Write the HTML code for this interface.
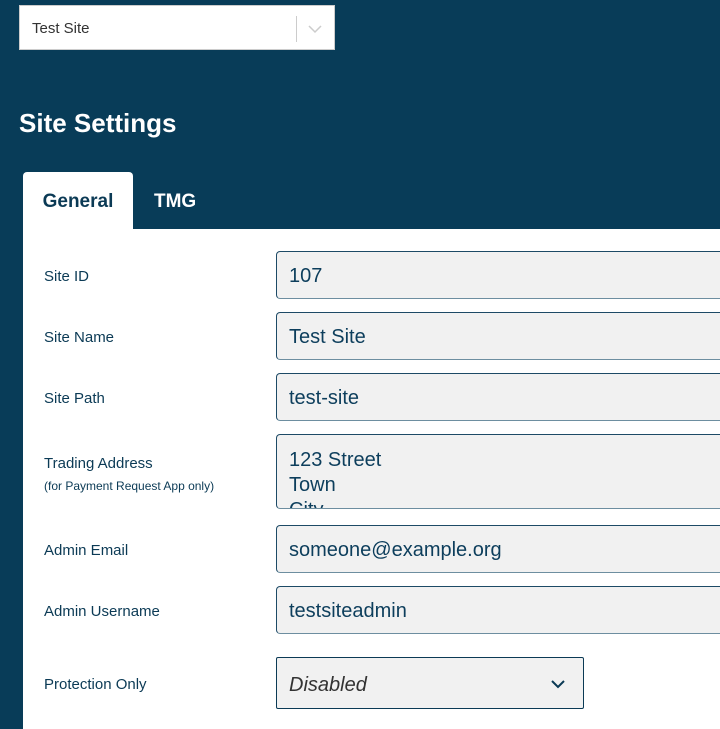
<!DOCTYPE html>
<html><head><style>
body{margin:0;width:720px;height:720px;overflow:hidden;background:#083c58;font-family:"Liberation Sans",sans-serif;position:relative}
.sel{position:absolute;left:19px;top:5px;width:316px;height:45px;background:#fff;border:1px solid #ccc;box-sizing:border-box}
.sel span{position:absolute;left:12px;top:14px;font-size:15px;color:#333}
.sel i{position:absolute;left:276px;top:10px;width:1px;height:26px;background:#ccc}
h1{position:absolute;left:19px;top:108px;margin:0;color:#fff;font-size:26px;font-weight:bold}
.tab{position:absolute;top:172px;height:60px;font-size:19px;font-weight:bold;line-height:60px}
.panel{position:absolute;left:23px;top:229px;width:697px;height:500px;background:#fff}
.lab{position:absolute;left:44px;font-size:15px;color:#0b3a55}
.inp{position:absolute;left:276px;width:460px;height:48px;background:#f1f1f1;border:1px solid #1d4a66;border-bottom-color:#6d8ea0;border-radius:4px;box-sizing:border-box;padding-left:12px;font-size:20px;color:#0d3e5c;line-height:48px;overflow:hidden}
</style></head><body>
<div class="sel"><span>Test Site</span><i></i>
<svg style="position:absolute;left:288px;top:18px" width="14" height="10"><path d="M1 2l6 6 6-6" stroke="#ccc" stroke-width="1.5" fill="none"/></svg></div>
<h1>Site Settings</h1>
<div class="panel"></div>
<div class="tab" style="left:23px;width:110px;background:#fff;border-radius:4px 4px 0 0;color:#0b3a55;text-align:center">General</div>
<div class="tab" style="left:154px;color:#fff">TMG</div>
<div class="lab" style="top:268px">Site ID</div>
<div class="inp" style="top:251px">107</div>
<div class="lab" style="top:329px">Site Name</div>
<div class="inp" style="top:312px">Test Site</div>
<div class="lab" style="top:390px">Site Path</div>
<div class="inp" style="top:373px">test-site</div>
<div class="lab" style="top:455px">Trading Address</div>
<div class="lab" style="top:479px;font-size:12px">(for Payment Request App only)</div>
<div class="inp" style="top:434px;height:75px;line-height:25px;padding-top:13px">123 Street<br>Town<br>City</div>
<div class="lab" style="top:542px">Admin Email</div>
<div class="inp" style="top:525px">someone@example.org</div>
<div class="lab" style="top:603px">Admin Username</div>
<div class="inp" style="top:586px">testsiteadmin</div>
<div class="lab" style="top:676px">Protection Only</div>
<div class="inp" style="top:657px;width:308px;height:52px;line-height:54px;font-style:italic;color:#333;border-radius:2px;border-color:#0b3a55">Disabled
<svg style="position:absolute;left:274px;top:21px" width="14" height="10"><path d="M1 2l6 6 6-6" stroke="#0b3a55" stroke-width="2" fill="none"/></svg></div>
</body></html>
